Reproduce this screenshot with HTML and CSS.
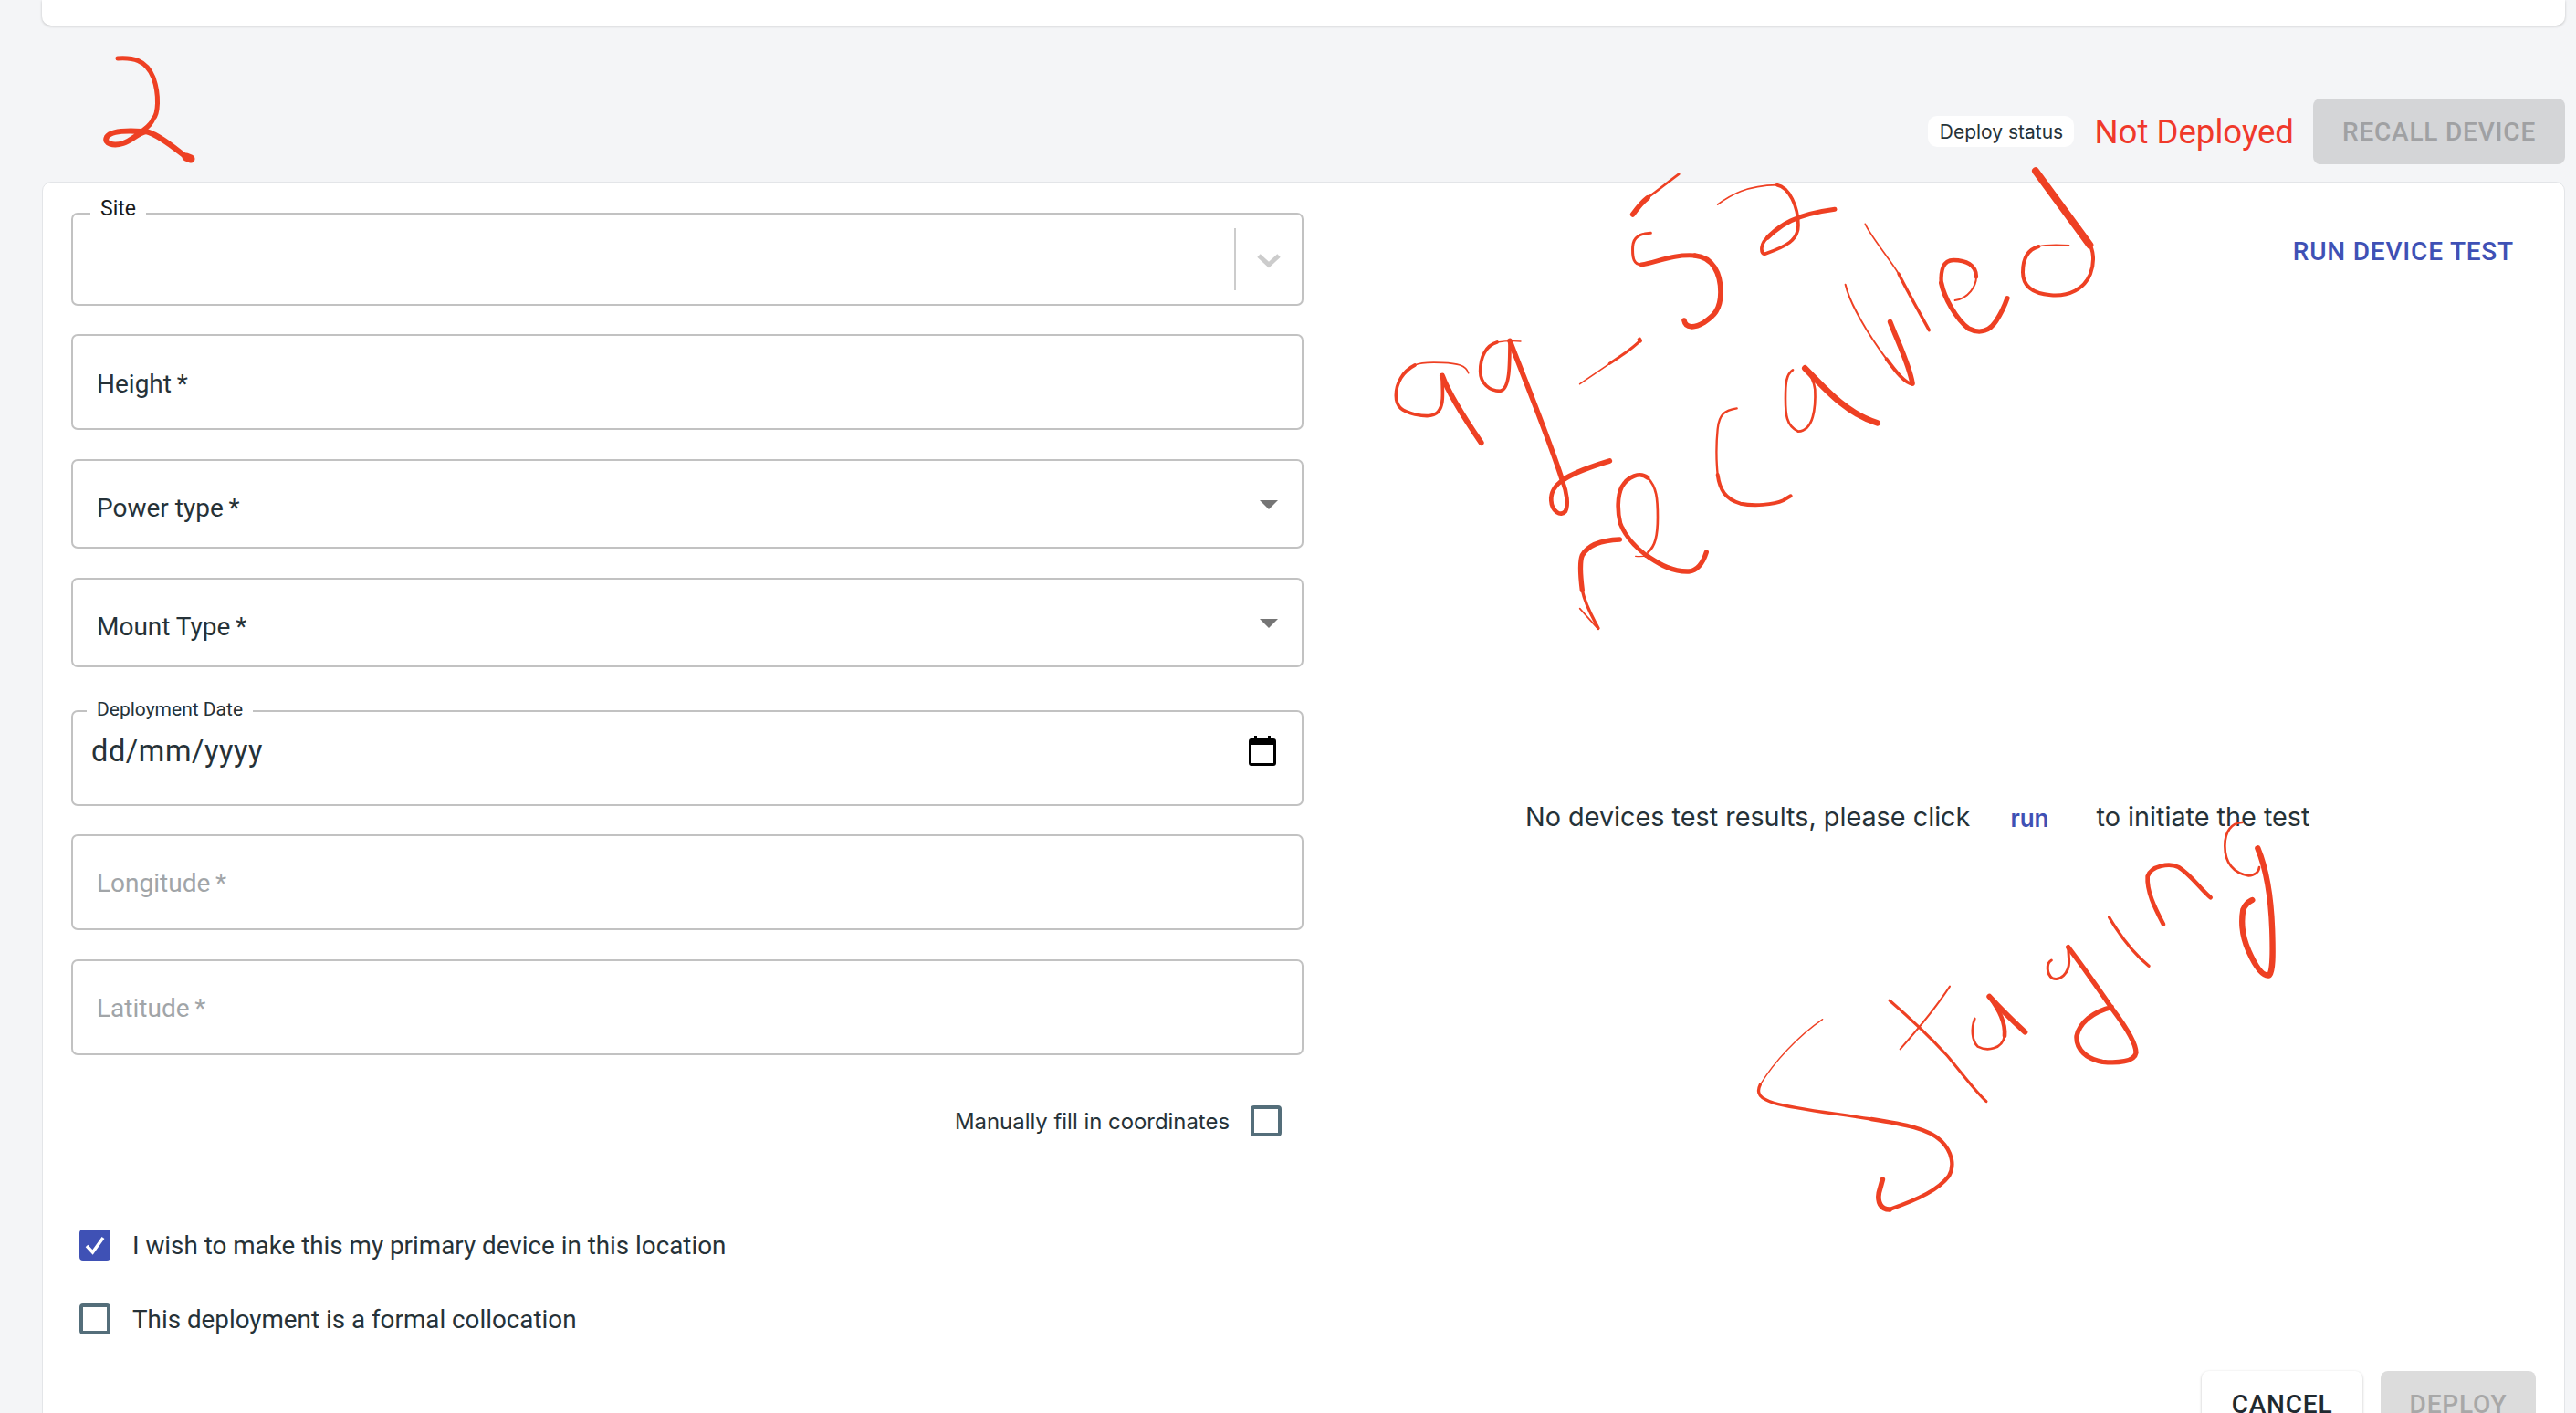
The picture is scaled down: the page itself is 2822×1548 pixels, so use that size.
FILE: index.html
```html
<!DOCTYPE html>
<html lang="en">
<head>
<meta charset="utf-8">
<title>Deploy device</title>
<link rel="stylesheet" href="styles.css">
</head>
<body>
<div class="page">
  <div class="top-card"></div>
  <div class="deploy-bar">
    <span class="chip">Deploy status</span>
    <span class="status">Not Deployed</span>
    <button class="btn btn-recall" type="button">RECALL DEVICE</button>
  </div>
  <div class="card">
    <form class="form">
      <div class="field field-site">
        <span class="legend legend-site">Site</span>
        <span class="divider"></span>
        <svg class="chevron" width="28" height="18" viewBox="0 0 28 18"><path d="M3 4 L14 14 L25 4" fill="none" stroke="#cccccc" stroke-width="5"/></svg>
      </div>
      <div class="field field-height"><span class="ph">Height&thinsp;*</span></div>
      <div class="field field-select"><span class="ph">Power type&thinsp;*</span><span class="caret"></span></div>
      <div class="field field-select"><span class="ph">Mount Type&thinsp;*</span><span class="caret"></span></div>
      <div class="field field-date">
        <span class="legend legend-date">Deployment Date</span>
        <span class="date-value">dd/mm/yyyy</span>
        <svg class="calendar" width="30" height="33" viewBox="0 0 30 33"><path d="M6 0h3v3h12V0h3v3h3a3 3 0 0 1 3 3v24a3 3 0 0 1-3 3H3a3 3 0 0 1-3-3V6a3 3 0 0 1 3-3h3zM3 10v20h24V10z" fill="#000"/></svg>
      </div>
      <div class="field field-coord"><span class="ph ph-muted">Longitude&thinsp;*</span></div>
      <div class="field field-coord field-lat"><span class="ph ph-muted">Latitude&thinsp;*</span></div>
      <div class="manual-row">
        <span class="manual-label">Manually fill in coordinates</span>
        <span class="box"></span>
      </div>
      <div class="check-row check-primary">
        <span class="box box-on"><svg width="26" height="26" viewBox="0 0 26 26"><path d="M4 14 L10.500 21 L22 5" fill="none" stroke="#fff" stroke-width="3.500"/></svg></span>
        <span class="check-label">I wish to make this my primary device in this location</span>
      </div>
      <div class="check-row check-second">
        <span class="box"></span>
        <span class="check-label">This deployment is a formal collocation</span>
      </div>
    </form>
    <div class="side">
      <div class="side-top"><span class="run-test">RUN DEVICE TEST</span></div>
      <div class="message">
        <span>No devices test results, please click</span>
        <span class="run-link">run</span>
        <span>to initiate the test</span>
      </div>
      <div class="actions">
        <button class="btn btn-cancel" type="button">CANCEL</button>
        <button class="btn btn-deploy" type="button">DEPLOY</button>
      </div>
    </div>
  </div>
</div>
<svg class="ink" width="2822" height="1548" viewBox="0 0 2822 1548" aria-hidden="true">
  <!-- section number -->
  <g>
    <path stroke-width="5" d="M129 64 C145 63 160 65 168 85 C175 105 173 125 168 130 C165 138 160 140 155 144"/>
    <path stroke-width="6" d="M155 144 C140 143 122 143 117 150 C113 158 125 160 135 157 C145 154 150 146 160 144"/>
    <path stroke-width="6" d="M160 144 C175 148 192 163 204 172"/>
    <path stroke-width="9" d="M204 172 L209 174"/>
  </g>
  <!-- 99-52 -->
  <g transform="translate(1500 170) scale(.33333)">
    <path stroke-width="5" d="M326 716 C318 690 290 684 240 682 C200 680 170 680 150 690"/>
    <path stroke-width="11" d="M150 690 C110 710 88 750 88 790 C88 830 110 842 150 852 C190 860 220 860 232 835 C246 810 240 770 240 725"/>
    <path stroke-width="18" d="M240 725 C260 780 310 860 368 945"/>
    <path stroke-width="4" d="M498 612 C470 610 440 612 420 615"/>
    <path stroke-width="11" d="M420 615 C385 625 365 660 365 710 C365 750 395 775 430 775 C462 770 462 690 462 610"/>
    <path stroke-width="17" d="M462 610 C520 760 590 930 635 1070"/>
    <path stroke-width="14" d="M635 1070 C650 1110 655 1150 645 1170 C630 1190 600 1170 598 1135 C596 1110 610 1085 640 1065"/>
    <path stroke-width="17" d="M640 1065 C680 1040 740 1020 790 1005"/>
    <path stroke-width="8" d="M1018 62 C980 90 950 115 915 140"/>
    <path stroke-width="17" d="M915 140 C895 155 880 175 866 195"/>
    <path stroke-width="9" d="M890 610 C860 640 820 665 790 685"/>
    <path stroke-width="5" d="M790 685 L692 752"/>
    <path stroke-width="14" d="M888 606 L890 610"/>
    <path stroke-width="9" d="M925 256 C890 258 868 268 866 300 C864 340 870 360 895 360"/>
    <path stroke-width="15" d="M895 360 C950 350 1000 325 1070 330"/>
    <path stroke-width="17" d="M1070 330 C1130 335 1155 390 1155 450 C1155 510 1130 530 1100 550 C1070 568 1040 570 1035 543"/>
    <path stroke-width="5" d="M1145 162 C1190 130 1240 100 1340 98"/>
    <path stroke-width="11" d="M1340 98 C1380 105 1410 170 1410 230 C1410 280 1370 300 1300 325 C1285 322 1285 290 1310 270"/>
    <path stroke-width="15" d="M1310 270 C1350 230 1400 195 1530 178"/>
  </g>
  <!-- recalled: a l l e d -->
  <g transform="translate(1900 170) scale(.33333)">
    <path stroke-width="8" d="M192 706 C170 720 168 750 168 800 C168 850 170 890 210 908 C260 905 268 830 265 770 C262 745 250 720 232 700"/>
    <path stroke-width="20" d="M232 700 C300 770 370 850 470 880"/>
    <path stroke-width="6" d="M365 425 C380 490 440 590 500 670"/>
    <path stroke-width="12" d="M500 670 C530 710 560 750 585 752"/>
    <path stroke-width="17" d="M585 750 C575 690 540 620 512 548"/>
    <path stroke-width="5" d="M430 226 C450 270 510 340 540 390"/>
    <path stroke-width="10" d="M540 390 C570 450 610 520 640 575"/>
    <path stroke-width="6" d="M725 477 C770 470 795 430 795 400"/>
    <path stroke-width="13" d="M795 400 C795 360 760 345 720 345 C685 345 678 380 680 420"/>
    <path stroke-width="16" d="M680 420 C690 470 730 540 770 570 C810 590 840 575 860 545 C880 515 890 490 897 470"/>
    <path stroke-width="4" d="M1100 296 C1060 294 1020 294 1000 300"/>
    <path stroke-width="12" d="M1000 300 C965 310 948 340 948 385 C948 430 980 455 1040 460 C1100 465 1150 440 1170 390 C1185 350 1180 310 1165 290"/>
    <path stroke-width="24" d="M1168 295 L990 52"/>
  </g>
  <!-- recalled: r e c -->
  <g transform="translate(1680 420) scale(.33333)">
    <path stroke-width="16" d="M283 513 C230 515 180 530 160 565 C150 590 155 640 160 680"/>
    <path stroke-width="10" d="M160 680 C170 730 195 770 213 805"/>
    <path stroke-width="5" d="M213 808 L152 740"/>
    <path stroke-width="4" d="M335 568 C350 570 365 568 375 565"/>
    <path stroke-width="8" d="M376 555 C400 535 408 500 408 440 C408 380 405 340 375 310"/>
    <path stroke-width="14" d="M375 310 C350 290 310 305 290 340 C275 370 275 420 285 460 C300 500 330 535 370 565"/>
    <path stroke-width="16" d="M370 565 C410 590 450 620 510 618 C545 615 560 580 568 555"/>
    <path stroke-width="7" d="M668 82 C630 88 610 100 605 150 C600 200 600 250 605 300"/>
    <path stroke-width="12" d="M605 300 C612 350 630 380 680 395 C720 403 790 400 820 385 L845 370"/>
  </g>
  <!-- Staging: S t a -->
  <g transform="translate(1900 1060) scale(.33333)">
    <path stroke-width="4" d="M290 170 C210 225 130 310 85 385"/>
    <path stroke-width="10" d="M85 385 C70 415 85 430 130 445 C200 465 300 475 450 498"/>
    <path stroke-width="13" d="M450 498 C560 515 640 530 680 570 C715 605 725 650 705 685 C670 730 610 760 510 795"/>
    <path stroke-width="17" d="M510 795 C480 795 470 770 475 740 L487 697"/>
    <path stroke-width="9" d="M510 108 C570 160 640 225 700 290 C750 350 790 405 828 440"/>
    <path stroke-width="6" d="M708 62 C670 120 610 195 545 268"/>
    <path stroke-width="8" d="M790 168 C778 200 780 240 800 260 C830 275 880 270 888 225"/>
    <path stroke-width="14" d="M888 225 C892 180 870 140 838 95"/>
    <path stroke-width="18" d="M838 95 C870 130 910 170 955 212"/>
  </g>
  <!-- Staging: g i n g -->
  <g transform="translate(2200 890) scale(.33333)">
    <path stroke-width="9" d="M142 486 C125 495 125 530 145 545 C170 555 200 530 200 490 L197 443"/>
    <path stroke-width="16" d="M197 443 C240 500 290 570 345 650 C390 710 420 760 420 790 C415 820 360 825 310 820 C260 812 222 780 225 735 C235 690 280 655 340 640"/>
    <path stroke-width="10" d="M332 345 C370 410 420 470 462 505"/>
    <path stroke-width="14" d="M510 368 C480 310 455 260 458 210 C470 175 530 165 560 180 C600 205 630 250 665 280"/>
    <path stroke-width="8" d="M768 33 C735 35 712 60 712 110 C712 165 740 200 790 208 C810 208 825 195 825 180"/>
    <path stroke-width="19" d="M820 118 C850 190 865 290 868 400 C870 470 870 520 858 535 C835 540 810 500 790 455 C770 410 765 360 772 320 C780 300 790 295 802 288"/>
  </g>
</svg>
</body>
</html>
```
FILE: styles.css
```css
* { box-sizing: border-box; }
html, body { margin: 0; height: 100%; overflow: hidden; }
body {
  background: #f4f5f7;
  color: #263238;
  font-family: Roboto, "Liberation Sans", sans-serif;
  font-size: 28px;
}
.page { margin-left: 46px; width: 2764px; }
.top-card {
  height: 28px;
  background: #fff;
  border-radius: 0 0 10px 10px;
  box-shadow: 0 1px 3px rgba(0, 0, 0, .2);
}
.deploy-bar {
  display: flex;
  justify-content: flex-end;
  align-items: center;
  height: 72px;
  margin-top: 80px;
}
.chip {
  display: flex;
  align-items: center;
  justify-content: center;
  width: 160px;
  height: 34px;
  background: #fff;
  border-radius: 10px;
  font-family: Inter, Roboto, sans-serif;
  font-size: 21px;
  color: #263238;
}
.status {
  margin: 0 21px 0 22px;
  font-size: 36.600px;
  color: #f0392b;
}
.btn {
  display: block;
  height: 72px;
  border: 0;
  border-radius: 8px;
  font-family: inherit;
  font-size: 28px;
  font-weight: 500;
  letter-spacing: .8px;
}
.btn-recall { width: 276px; background: #d4d5d7; color: #a0a1a3; }
.card {
  display: flex;
  height: 1400px;
  margin-top: 19px;
  padding: 33px 0 0 31px;
  background: #fff;
  border: 1px solid #e3e5e8;
  border-radius: 10px;
}
.form { display: flex; flex-direction: column; flex: 0 0 1350px; }
.field {
  position: relative;
  display: flex;
  align-items: center;
  padding: 0 0 0 26px;
  border: 2px solid #c2c2c2;
  border-radius: 7px;
}
.field-site { height: 102px; }
.field-height { height: 105px; margin-top: 31px; }
.field-height .ph { padding-top: 4px; }
.field-select { height: 98px; margin-top: 32px; }
.field-select .ph { padding-top: 9px; }
.field-date { height: 105px; margin-top: 47px; padding-left: 20px; }
.field-coord { height: 105px; margin-top: 31px; }
.field-coord .ph { padding-top: 2px; }
.field-lat { margin-top: 32px; }
.ph { line-height: 34px; }
.ph-muted { color: #a1a5a8; }
.legend {
  position: absolute;
  top: -18px;
  padding: 0 11px;
  background: #fff;
  font-size: 21.600px;
  line-height: 30px;
  white-space: nowrap;
}
.legend-site { top: -21px; left: 19px; font-size: 23px; color: #1a1a1a; }
.legend-date { left: 15px; font-size: 21px; }
.divider {
  position: absolute;
  top: 15px;
  right: 72px;
  width: 2px;
  height: 68px;
  background: #cccccc;
}
.chevron { position: absolute; top: 41px; right: 22px; }
.caret {
  position: absolute;
  top: 43px;
  right: 26px;
  width: 0;
  height: 0;
  border-left: 10px solid transparent;
  border-right: 10px solid transparent;
  border-top: 10px solid #757575;
}
.date-value {
  align-self: flex-start;
  margin-top: 24px;
  font-size: 32.500px;
  line-height: 38px;
  letter-spacing: .6px;
}
.calendar { position: absolute; top: 26px; right: 28px; }
.manual-row {
  display: flex;
  justify-content: flex-end;
  align-items: center;
  height: 34px;
  margin-top: 55px;
  padding-right: 24px;
}
.manual-label { font-family: Inter, Roboto, sans-serif; font-size: 23.900px; margin-right: 23px; }
.box {
  display: block;
  flex: none;
  width: 34px;
  height: 34px;
  border: 4px solid #546e7a;
  border-radius: 4px;
}
.box-on {
  display: flex;
  align-items: center;
  justify-content: center;
  background: #3f51b5;
  border-color: #3f51b5;
}
.check-row {
  display: flex;
  align-items: center;
  gap: 24px;
  height: 34px;
  padding-left: 9px;
  font-size: 27.800px;
}
.check-primary { margin-top: 102px; }
.check-second { margin-top: 47px; }
.side { flex: 1; display: flex; flex-direction: column; }
.side-top {
  display: flex;
  justify-content: flex-end;
  height: 36px;
  margin-top: 25px;
  padding-right: 55px;
}
.run-test { font-weight: 500; color: #3f51b5; line-height: 36px; letter-spacing: .8px; }
.message {
  display: flex;
  align-items: center;
  height: 40px;
  margin: 580px 0 0 243px;
  font-family: Inter, Roboto, sans-serif;
  font-size: 28.800px;
}
.run-link {
  margin: 0 52px 0 44px;
  padding-top: 5px;
  font-size: 26px;
  font-weight: 600;
  color: #3f51b5;
}
.actions {
  display: flex;
  justify-content: flex-end;
  gap: 20px;
  margin-top: 588px;
  padding-right: 31px;
}
.btn-cancel {
  width: 176px;
  background: #fff;
  color: #1f2a30;
  box-shadow: 0 1px 3px rgba(0, 0, 0, .25);
}
.btn-deploy { width: 170px; background: #dcdcdc; color: #a8a8a8; }
.ink {
  position: absolute;
  top: 0;
  left: 0;
  pointer-events: none;
}
.ink path {
  fill: none;
  stroke: #ee4023;
  stroke-linecap: round;
  stroke-linejoin: round;
}
```
